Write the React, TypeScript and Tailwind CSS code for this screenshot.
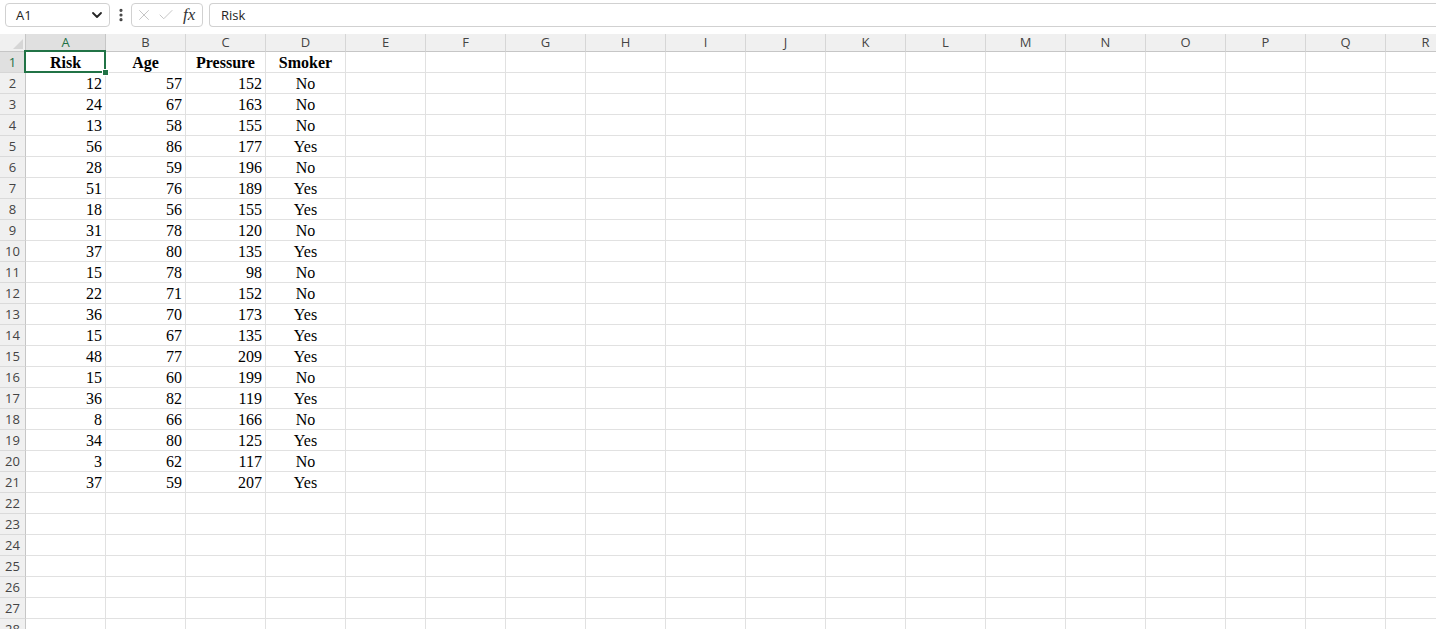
import { ChevronDown, X, Check, EllipsisVertical } from 'lucide-react'

const cols = ['A', 'B', 'C', 'D', 'E', 'F', 'G', 'H', 'I', 'J', 'K', 'L', 'M', 'N', 'O', 'P', 'Q', 'R']

const data: [number, number, number, string][] = [
  [12, 57, 152, 'No'],
  [24, 67, 163, 'No'],
  [13, 58, 155, 'No'],
  [56, 86, 177, 'Yes'],
  [28, 59, 196, 'No'],
  [51, 76, 189, 'Yes'],
  [18, 56, 155, 'Yes'],
  [31, 78, 120, 'No'],
  [37, 80, 135, 'Yes'],
  [15, 78, 98, 'No'],
  [22, 71, 152, 'No'],
  [36, 70, 173, 'Yes'],
  [15, 67, 135, 'Yes'],
  [48, 77, 209, 'Yes'],
  [15, 60, 199, 'No'],
  [36, 82, 119, 'Yes'],
  [8, 66, 166, 'No'],
  [34, 80, 125, 'Yes'],
  [3, 62, 117, 'No'],
  [37, 59, 207, 'Yes'],
]

const uiFont = { fontFamily: '"Open Sans", "Liberation Sans", Arial, sans-serif' }
const cellFont = { fontFamily: '"Liberation Serif", "Times New Roman", serif' }

function FormulaBar() {
  return (
    <div className="flex items-center h-[30px] pt-[3px] pb-[3px] bg-white" style={uiFont}>
      <div className="ml-[5px] w-[105px] h-[24px] flex items-center justify-between border border-[#d1d1d1] rounded-[4px] pl-[10px] pr-[4px] text-[13px] text-[#242424]">
        <span className="pt-[1px]">A1</span>
        <ChevronDown className="w-4 h-4 text-[#242424]" strokeWidth={2.75} />
      </div>
      <div className="w-[21px] flex justify-center">
        <EllipsisVertical className="w-4 h-4 text-[#424242]" strokeWidth={2.75} />
      </div>
      <div className="w-[72px] h-[24px] flex items-center border border-[#d1d1d1] rounded-[4px] px-[3px] gap-[4px]">
        <X className="w-[18px] h-[18px] text-[#c4c4c4]" strokeWidth={1.3} />
        <Check className="w-[18px] h-[18px] text-[#c4c4c4]" strokeWidth={1.3} />
        <span className="ml-[4px] text-[17px] italic text-[#333]" style={cellFont}>fx</span>
      </div>
      <div className="ml-[6px] flex-1 h-[24px] flex items-center border border-[#d1d1d1] border-r-0 rounded-l-[4px] pl-[11px] pt-[1px] text-[13px] text-[#242424]">
        Risk
      </div>
    </div>
  )
}

export default function App() {
  const rows = Array.from({ length: 28 }, (_, i) => i + 1)
  return (
    <div className="w-[1436px] h-[629px] overflow-hidden bg-white">
      <FormulaBar />
      <div className="mt-[4px] w-[1436px] overflow-hidden">
        <div className="grid grid-cols-[26px_repeat(18,80px)] w-max">
          {/* header row */}
          <div className="h-[18px] bg-[#f0f0f0] border-r border-b border-[#c6c6c6] relative">
            <div className="absolute right-[2px] bottom-[2px] w-0 h-0 border-l-[10px] border-l-transparent border-b-[10px] border-b-[#d6d6d6]" />
          </div>
          {cols.map((c) => (
            <div
              key={c}
              className={`h-[18px] flex items-center justify-center text-[13px] border-r border-b ${
                c === 'A'
                  ? 'bg-[#e0e0e0] text-[#1e7145] border-r-[#c6c6c6] border-b-[#c6c6c6]'
                  : 'bg-[#f0f0f0] text-[#444] border-[#d6d6d6] border-b-[#c6c6c6]'
              }`}
              style={uiFont}
            >
              {c}
            </div>
          ))}

          {rows.map((r) => {
            const d = r >= 2 && r <= 21 ? data[r - 2] : null
            return (
              <div key={r} className="contents">
                <div
                  className={`h-[21px] flex items-center justify-center pt-[1px] text-[13px] border-b border-r ${
                    r === 1
                      ? 'bg-[#e0e0e0] text-[#1e7145] border-b-[#d6d6d6] border-r-[#c6c6c6]'
                      : 'bg-[#f0f0f0] text-[#444] border-b-[#dadada] border-r-[#c6c6c6]'
                  }`}
                  style={uiFont}
                >
                  {r}
                </div>
                {cols.map((c, ci) => {
                  let content: string | number = ''
                  let align = 'justify-end pr-[3px]'
                  let bold = ''
                  if (r === 1 && ci < 4) {
                    content = ['Risk', 'Age', 'Pressure', 'Smoker'][ci]
                    align = 'justify-center'
                    bold = 'font-bold'
                  } else if (d && ci < 4) {
                    content = d[ci]
                    if (ci === 3) align = 'justify-center'
                  }
                  const selected = r === 1 && ci === 0
                  return (
                    <div
                      key={c}
                      className={`relative h-[21px] flex items-center pt-[1px] text-[16px] text-black border-r border-b border-[#e1e1e1] ${align} ${bold} ${selected ? 'z-10' : ''}`}
                      style={cellFont}
                    >
                      {content}
                      {selected && (
                        <>
                          <div className="absolute left-[-2px] top-[-2px] right-[-1px] bottom-[-1px] border-2 border-[#217346] pointer-events-none" />
                          <div className="absolute right-[-4px] bottom-[-4px] w-[7px] h-[7px] bg-[#217346] border border-white" />
                        </>
                      )}
                    </div>
                  )
                })}
              </div>
            )
          })}
        </div>
      </div>
    </div>
  )
}
